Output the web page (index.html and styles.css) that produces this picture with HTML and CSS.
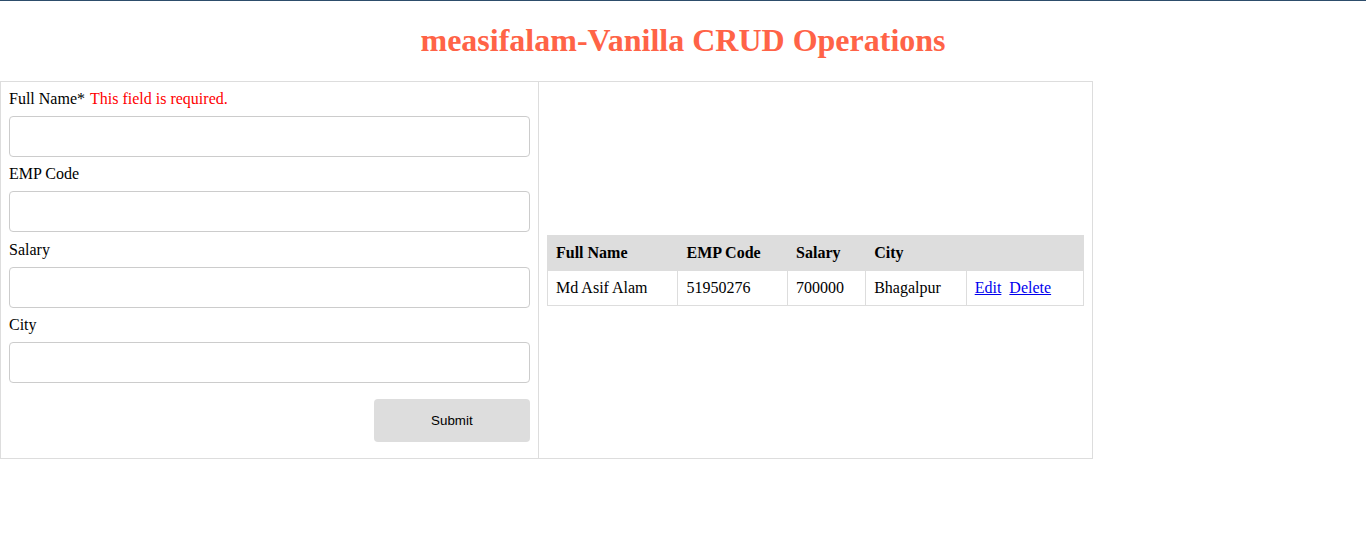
FILE: index.html
```html
<!DOCTYPE html>
<html>
<head>
<meta charset="utf-8">
<title>Vanilla CRUD</title>
<link rel="stylesheet" href="styles.css">
</head>
<body>
<h1 class="title">measifalam-Vanilla CRUD Operations</h1>
<table class="layout">
  <tr>
    <td class="form-cell">
      <form autocomplete="off">
        <div class="field">
          <label>Full Name*</label><label class="validation-error">This field is required.</label>
          <input type="text" class="text-input">
        </div>
        <div class="field">
          <label>EMP Code</label>
          <input type="text" class="text-input">
        </div>
        <div class="field">
          <label>Salary</label>
          <input type="text" class="text-input">
        </div>
        <div class="field">
          <label>City</label>
          <input type="text" class="text-input">
        </div>
        <div class="form-action-buttons">
          <input type="button" class="submit-btn" value="Submit">
        </div>
      </form>
    </td>
    <td class="list-cell">
      <table class="list">
        <thead>
          <tr>
            <th>Full Name</th>
            <th>EMP Code</th>
            <th>Salary</th>
            <th>City</th>
            <th></th>
          </tr>
        </thead>
        <tbody>
          <tr>
            <td>Md Asif Alam</td>
            <td>51950276</td>
            <td>700000</td>
            <td>Bhagalpur</td>
            <td><a class="action">Edit</a> <a class="action">Delete</a></td>
          </tr>
        </tbody>
      </table>
    </td>
  </tr>
</table>
</body>
</html>
```
FILE: styles.css
```css
html, body {
  background: #ffffff;
}
body {
  margin: 0;
  border-top: 1px solid #2d4d6b;
  font-family: "Liberation Serif", "Times New Roman", serif;
  font-size: 16px;
  color: #000;
}
.title {
  margin: 21.44px 0;
  font-size: 32px;
  font-weight: bold;
  text-align: center;
  color: #ff6347;
}
.layout {
  width: 80%;
  border-collapse: collapse;
}
.layout > tbody > tr > td {
  border: 1px solid #dddddd;
  padding: 8px;
  text-align: left;
  vertical-align: middle;
}
.form-cell {
  width: 521px;
}
.field {
  padding-bottom: 0.34px;
}
.text-input {
  width: 100%;
  padding: 12px 20px;
  margin: 8px 0;
  display: inline-block;
  border: 1px solid #ccc;
  border-radius: 4px;
  box-sizing: border-box;
  font-family: "Liberation Sans", Arial, sans-serif;
  font-size: 13.333px;
}
.validation-error {
  color: red;
  margin-left: 5px;
}
.form-action-buttons {
  text-align: right;
}
.submit-btn {
  width: 30%;
  background-color: #ddd;
  color: #000;
  padding: 14px 20px;
  margin: 8px 0;
  border: none;
  border-radius: 4px;
  font-family: "Liberation Sans", Arial, sans-serif;
  font-size: 13.333px;
  cursor: pointer;
}
.list {
  width: 100%;
  border-collapse: collapse;
}
.list th, .list td {
  border: 1px solid #dddddd;
  padding: 8px;
  text-align: left;
}
.list thead tr {
  background-color: #dddddd;
}
.action {
  color: #0000ee;
  text-decoration: underline;
  margin-right: 4px;
  cursor: pointer;
}
```
